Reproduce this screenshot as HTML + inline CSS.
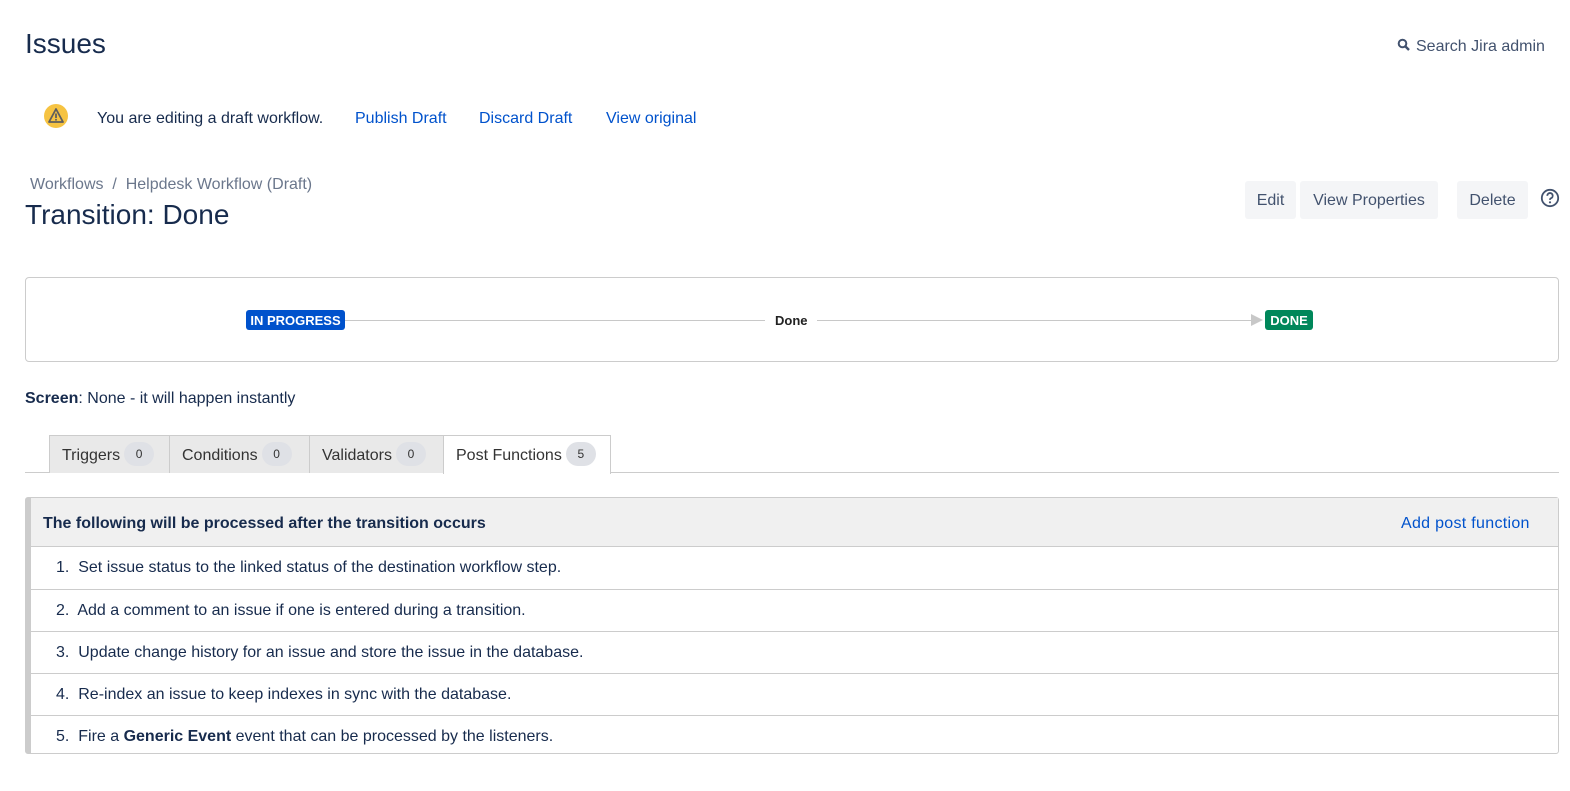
<!DOCTYPE html>
<html><head><style>
*{box-sizing:border-box;margin:0;padding:0}
body{width:1570px;height:791px;background:#fff;font-family:"Liberation Sans",sans-serif;color:#172b4d;position:relative;overflow:hidden;font-size:16px}
.a{position:absolute;white-space:nowrap}
a{color:#0052cc;text-decoration:none}
.btn{position:absolute;top:181px;height:38px;background:#f4f5f7;border-radius:3px;color:#42526e;font-size:16px;line-height:40px;text-align:center}
.tab{position:absolute;top:435px;height:38px;background:#e9e9e9;border:1px solid #ccc;border-bottom:none;font-size:16px;line-height:40px;padding-left:12px;color:#333}
.badge{display:inline-block;background:#dfe1e6;border-radius:12px;min-width:30px;height:24px;line-height:24px;text-align:center;font-size:12px;margin-left:4px;vertical-align:middle;position:relative;top:-2px}
.row{position:absolute;left:31px;width:1527px;border-top:1px solid #ccc;font-size:16px;padding-left:25px;color:#172b4d;line-height:42px}
</style></head><body>
<div class="a" style="left:25px;top:28px;font-size:28px">Issues</div>
<div class="a" style="left:1397px;top:38px;font-size:16px;color:#42526e"><svg width="14" height="14" viewBox="0 0 14 14" style="vertical-align:-1px;margin-right:5px"><circle cx="5.5" cy="5.5" r="3.8" fill="none" stroke="#42526e" stroke-width="2"/><path d="M8.5 8.5L12 12" stroke="#42526e" stroke-width="2.4"/></svg>Search Jira admin</div>
<svg class="a" style="left:43px;top:103px" width="26" height="26" viewBox="0 0 26 26"><circle cx="13" cy="13" r="12" fill="#f6c342"/><path d="M13 6L20 19H6Z" fill="none" stroke="#5e5e5e" stroke-width="1.8" stroke-linejoin="round"/><path d="M13 10.5v4.5" stroke="#5e5e5e" stroke-width="1.8"/><circle cx="13" cy="16.8" r="1" fill="#5e5e5e"/></svg>
<div class="a" style="left:97px;top:110px">You are editing a draft workflow.</div>
<a class="a" style="left:355px;top:110px">Publish Draft</a>
<a class="a" style="left:479px;top:110px">Discard Draft</a>
<a class="a" style="left:606px;top:110px">View original</a>
<div class="a" style="left:30px;top:176px;color:#6b778c">Workflows &nbsp;/ &nbsp;Helpdesk Workflow (Draft)</div>
<div class="a" style="left:25px;top:199px;font-size:28px">Transition: Done</div>
<div class="btn" style="left:1245px;width:51px">Edit</div>
<div class="btn" style="left:1300px;width:138px">View Properties</div>
<div class="btn" style="left:1457px;width:71px">Delete</div>
<svg class="a" style="left:1540px;top:188px" width="20" height="20" viewBox="0 0 20 20"><circle cx="10" cy="10" r="8.2" fill="none" stroke="#42526e" stroke-width="1.8"/><path d="M7.3 7.8a2.7 2.7 0 1 1 3.6 2.5c-.7.3-.9.8-.9 1.6" fill="none" stroke="#42526e" stroke-width="1.8"/><circle cx="10" cy="14.3" r="1.1" fill="#42526e"/></svg>
<div class="a" style="left:25px;top:277px;width:1534px;height:85px;border:1px solid #ccc;border-radius:4px"></div>
<div class="a" style="left:246px;top:310px;width:99px;height:20px;background:#0052cc;color:#fff;border-radius:3px;font-size:13px;font-weight:bold;line-height:21px;text-align:center">IN PROGRESS</div>
<div class="a" style="left:345px;top:320px;width:420px;height:1px;background:#c8c8c8"></div>
<div class="a" style="left:775px;top:313px;font-size:13px;font-weight:bold;color:#222">Done</div>
<div class="a" style="left:817px;top:320px;width:438px;height:1px;background:#c8c8c8"></div>
<div class="a" style="left:1251px;top:314px;width:0;height:0;border-left:12px solid #c8c8c8;border-top:6px solid transparent;border-bottom:6px solid transparent"></div>
<div class="a" style="left:1265px;top:310px;width:48px;height:20px;background:#00875a;color:#fff;border-radius:3px;font-size:13px;font-weight:bold;line-height:21px;text-align:center">DONE</div>
<div class="a" style="left:25px;top:390px"><b>Screen</b>: None - it will happen instantly</div>
<div class="a" style="left:25px;top:472px;width:1534px;height:1px;background:#ccc"></div>
<div class="tab" style="left:49px;width:121px">Triggers<span class="badge">0</span></div>
<div class="tab" style="left:169px;width:141px">Conditions<span class="badge">0</span></div>
<div class="tab" style="left:309px;width:135px">Validators<span class="badge">0</span></div>
<div class="tab" style="left:443px;width:168px;height:39px;background:#fff">Post Functions<span class="badge">5</span></div>
<div class="a" style="left:25px;top:497px;width:1534px;height:257px;border:1px solid #ccc;border-left:6px solid #ccc;border-radius:3px"></div>
<div class="a" style="left:31px;top:498px;width:1527px;height:48px;background:#f0f0f0"></div>
<div class="a" style="left:43px;top:515px;font-weight:bold">The following will be processed after the transition occurs</div>
<a class="a" style="left:1401px;top:515px;letter-spacing:0.3px">Add post function</a>
<div class="row" style="top:546px;height:43px">1.&nbsp; Set issue status to the linked status of the destination workflow step.</div>
<div class="row" style="top:589px;height:42px">2.&nbsp; Add a comment to an issue if one is entered during a transition.</div>
<div class="row" style="top:631px;height:42px">3.&nbsp; Update change history for an issue and store the issue in the database.</div>
<div class="row" style="top:673px;height:42px">4.&nbsp; Re-index an issue to keep indexes in sync with the database.</div>
<div class="row" style="top:715px;height:38px">5.&nbsp; Fire a <b>Generic Event</b> event that can be processed by the listeners.</div>
</body></html>
